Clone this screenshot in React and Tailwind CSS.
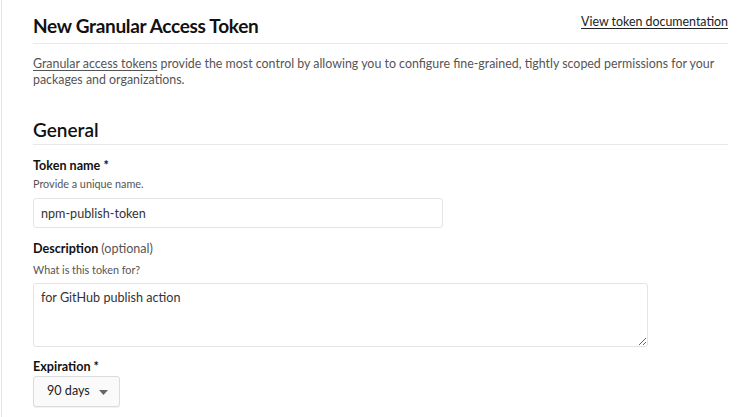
import React from 'react';

export default function App() {
  return (
    <div className="min-h-screen bg-white font-['Lato','Liberation_Sans',sans-serif] text-[#111]">
      <div className="ml-[1px] min-h-screen border-l border-[#e6e6e6] pl-[31px] pr-[22px] pt-[12px]">
        {/* Header */}
        <div className="flex items-end justify-between border-b border-[#e8e8e8] pb-[3px]">
          <h1 className="text-[19px] font-bold leading-[28px] tracking-[-0.3px]">
            New Granular Access Token
          </h1>
          <a href="#" className="mb-[10px] text-[12.4px] leading-[16px] text-[#222] underline underline-offset-2">
            View token documentation
          </a>
        </div>

        <p className="mt-[12px] text-[12.4px] leading-[16px] text-[#555]">
          <a href="#" className="underline underline-offset-2">Granular access tokens</a> provide the
          most control by allowing you to configure fine-grained, tightly scoped permissions for your
          packages and organizations.
        </p>

        {/* General */}
        <h2 className="mt-[29px] border-b border-[#e8e8e8] pb-[1px] text-[19px] font-semibold leading-[26px]">
          General
        </h2>

        <div className="mt-[12px]">
          <label className="block text-[12.6px] font-bold leading-[18px]">Token name *</label>
          <p className="mt-[1px] text-[10.8px] leading-[15px] text-[#555]">Provide a unique name.</p>
          <input
            defaultValue="npm-publish-token"
            className="mt-[7px] block h-[30px] w-[410px] rounded-[3px] border border-[#e4e4e4] px-[7px] text-[12.6px] text-[#333] outline-none"
          />
        </div>

        <div className="mt-[12px]">
          <label className="block text-[12.6px] font-bold leading-[18px]">
            Description <span className="font-normal text-[#555]">(optional)</span>
          </label>
          <p className="mt-[4px] text-[10.8px] leading-[15px] text-[#555]">What is this token for?</p>
          <textarea
            defaultValue="for GitHub publish action"
            className="mt-[6px] block h-[64px] w-[615px] rounded-[3px] border border-[#e4e4e4] px-[7px] py-[5px] text-[12.6px] leading-[18px] text-[#333] outline-none"
          />
        </div>

        <div className="mt-[11px]">
          <label className="block text-[12.6px] font-bold leading-[18px]">Expiration *</label>
          <button className="flex h-[31px] w-[87px] items-center gap-[9px] rounded-[3px] border border-[#dcdcdc] bg-[#fafafa] pl-[13px] text-[12.6px] text-[#222] shadow-[0_1px_1px_rgba(0,0,0,0.06)]">
            90 days
            <svg width="9" height="5" viewBox="0 0 9 5" className="mt-[1px]">
              <path d="M0 0h9L4.5 5z" fill="#666" />
            </svg>
          </button>
        </div>
      </div>
    </div>
  );
}
